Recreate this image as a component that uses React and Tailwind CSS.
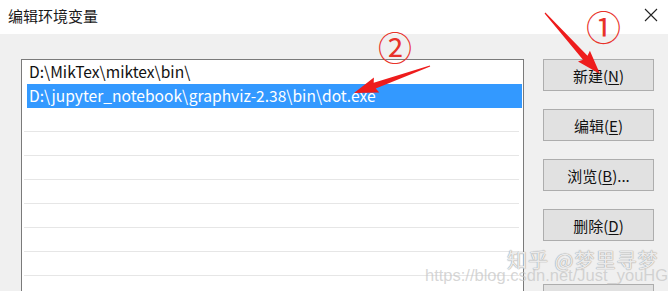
import React from "react";

const FONT = { fontFamily: '"Noto Sans CJK SC", "Noto Sans", sans-serif' };

const items = [
  { text: "D:\\MikTex\\miktex\\bin\\", selected: false },
  { text: "D:\\jupyter_notebook\\graphviz-2.38\\bin\\dot.exe", selected: true },
];

const buttons = [
  { label: "新建", key: "N", tail: ")" },
  { label: "编辑", key: "E", tail: ")" },
  { label: "浏览", key: "B", tail: ")..." },
  { label: "删除", key: "D", tail: ")" },
];

// tapering red annotation arrow, from tail to tip
function arrowPoints(x1, y1, x2, y2) {
  const dx = x2 - x1;
  const dy = y2 - y1;
  const len = Math.hypot(dx, dy);
  const ux = dx / len;
  const uy = dy / len;
  const nx = -uy;
  const ny = ux;
  const head = 22;
  const bx = x2 - ux * head;
  const by = y2 - uy * head;
  const p = (x, y, w) => [
    [x + nx * w, y + ny * w],
    [x - nx * w, y - ny * w],
  ];
  const [t1, t2] = p(x1, y1, 0.6);
  const [s1, s2] = p(bx, by, 3);
  const [h1, h2] = p(bx - ux * 2, by - uy * 2, 8);
  return [t1, s1, h1, [x2, y2], h2, s2, t2]
    .map(([x, y]) => `${x.toFixed(1)},${y.toFixed(1)}`)
    .join(" ");
}

export default function App() {
  return (
    <div className="relative w-[668px] h-[291px] overflow-hidden bg-[#f0f0f0]" style={FONT}>
      {/* Title bar */}
      <div className="h-[34px] bg-white flex items-center justify-between pl-[8px] pr-[10px] pb-[4px]">
        <span className="text-[15px] text-[#1a1a1a] leading-none">编辑环境变量</span>
        <svg width="14" height="14" viewBox="0 0 14 14">
          <path d="M1 1 L13 13 M13 1 L1 13" stroke="#222" strokeWidth="1.1" />
        </svg>
      </div>

      <div className="flex pl-[21px] pt-[25px]">
        {/* List */}
        <div className="w-[503px] h-[260px] bg-white border border-[#7a7a7a] pr-[1px]">
          {items.map((it, i) => (
            <div
              key={i}
              className={`h-[24px] flex items-center ml-[5px] pl-[2px] text-[15.6px] leading-none ${
                it.selected ? "bg-[#3399ff] text-white" : "text-[#111]"
              }`}
            >
              {it.text}
            </div>
          ))}
          {[0, 1, 2, 3, 4, 5, 6, 7].map((i) => (
            <div key={i} className="h-[24px] ml-[2px] mr-[3px] border-b border-[#e6e6e6]" />
          ))}
        </div>

        {/* Buttons */}
        <div className="flex flex-col gap-[18px] ml-[19px]">
          {buttons.map((b) => (
            <div
              key={b.key}
              className="w-[111px] h-[32px] bg-[#e1e1e1] border border-[#adadad] flex items-center justify-center text-[15px] text-[#111] leading-none"
            >
              {b.label}(<span className="underline underline-offset-2">{b.key}</span>
              {b.tail}
            </div>
          ))}
          <div className="w-[111px] h-[32px] mt-[25px] bg-[#e1e1e1] border border-[#adadad]" />
        </div>
      </div>

      {/* Watermark */}
      <div className="absolute left-[507px] top-[250px] whitespace-nowrap text-[20px] leading-none text-white/80 tracking-[1px] [text-shadow:0_0_1px_#999,0_0_1px_#999]">
        知乎 @梦里寻梦
      </div>
      <div
        className="absolute left-[425px] top-[267px] whitespace-nowrap text-[16.5px] leading-none text-[#c4c4c4]/70"
        style={{ fontFamily: '"Liberation Sans", sans-serif' }}
      >
        https://blog.csdn.net/Just_youHG
      </div>

      {/* Annotations */}
      <div className="absolute left-[586px] top-[8px] text-[35px] leading-none text-[#e8322a]">①</div>
      <div className="absolute left-[378px] top-[30px] text-[34px] leading-none text-[#e8322a]">②</div>
      <svg className="absolute left-0 top-0" width="668" height="291" viewBox="0 0 668 291">
        <polygon points={arrowPoints(545, 13, 600, 74)} fill="#ee1c1c" />
        <polygon points={arrowPoints(430, 66, 354, 93)} fill="#ee1c1c" />
      </svg>
    </div>
  );
}
